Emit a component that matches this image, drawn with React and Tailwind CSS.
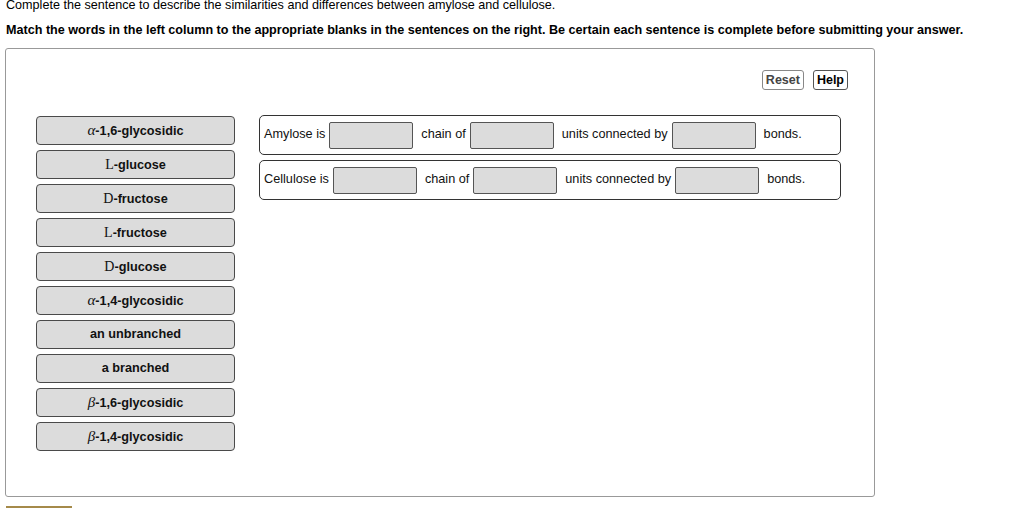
import React from 'react';

const serif = { fontFamily: '"Liberation Serif", "DejaVu Serif", serif' };

function Greek({ ch }) {
  return <span className="italic font-normal text-[15px]" style={serif}>{ch}</span>;
}
function Roman({ ch }) {
  return <span className="font-normal text-[14px]" style={serif}>{ch}</span>;
}

const items = [
  <><Greek ch="α" />-1,6-glycosidic</>,
  <><Roman ch="L" />-glucose</>,
  <><Roman ch="D" />-fructose</>,
  <><Roman ch="L" />-fructose</>,
  <><Roman ch="D" />-glucose</>,
  <><Greek ch="α" />-1,4-glycosidic</>,
  <>an unbranched</>,
  <>a branched</>,
  <><Greek ch="β" />-1,6-glycosidic</>,
  <><Greek ch="β" />-1,4-glycosidic</>,
];

function Blank() {
  return <span className="ml-[4px] mr-[8px] w-[84px] h-[27px] bg-[#dcdcdc] border border-[#555] rounded-[2px] shrink-0" />;
}

function Sentence({ subject }) {
  return (
    <div className="flex items-center h-[40px] pl-[4px] border border-[#333] rounded-[5px] text-[12.7px] text-[#111]">
      <span>{subject}</span>
      <Blank />
      <span>chain of</span>
      <Blank />
      <span>units connected by</span>
      <Blank />
      <span>bonds.</span>
    </div>
  );
}

export default function App() {
  return (
    <div className="w-[1024px] h-[508px] overflow-hidden bg-white px-[5px] text-black" style={{ fontFamily: '"Liberation Sans", Arial, sans-serif' }}>
      <p className="text-[12.6px] leading-[13px] mt-[-1px] pl-[1px] whitespace-nowrap">
        Complete the sentence to describe the similarities and differences between amylose and cellulose.
      </p>
      <p className="text-[12.6px] leading-[14px] font-bold mt-[11px] pl-[1px] whitespace-nowrap">
        Match the words in the left column to the appropriate blanks in the sentences on the right. Be certain each sentence is complete before submitting your answer.
      </p>

      <div className="mt-[11px] w-[870px] h-[449px] border border-[#999] rounded-[3px] pt-[21px]">
        <div className="flex justify-end gap-[9px] pr-[26px]">
          <button className="h-[20px] px-[3px] border border-[#888] rounded-[3px] text-[12.5px] font-bold text-[#444] bg-white leading-none">Reset</button>
          <button className="h-[20px] px-[3px] border border-[#555] rounded-[3px] text-[12.5px] font-bold text-black bg-white leading-none">Help</button>
        </div>

        <div className="flex mt-[25px] pl-[30px]">
          <div className="w-[199px] flex flex-col gap-[5px] pt-[1px]">
            {items.map((it, i) => (
              <div key={i} className="h-[29px] flex items-center justify-center bg-[#dcdcdc] border border-[#4a4a4a] rounded-[4px] text-[12.7px] font-bold text-[#111]">
                <span>{it}</span>
              </div>
            ))}
          </div>
          <div className="ml-[24px] w-[582px] flex flex-col gap-[5px]">
            <Sentence subject="Amylose is" />
            <Sentence subject="Cellulose is" />
          </div>
        </div>
      </div>

      <div className="mt-[9px] ml-[1px] w-[66px] h-[10px] border-t-2 border-[#a58a4a]" />
    </div>
  );
}
